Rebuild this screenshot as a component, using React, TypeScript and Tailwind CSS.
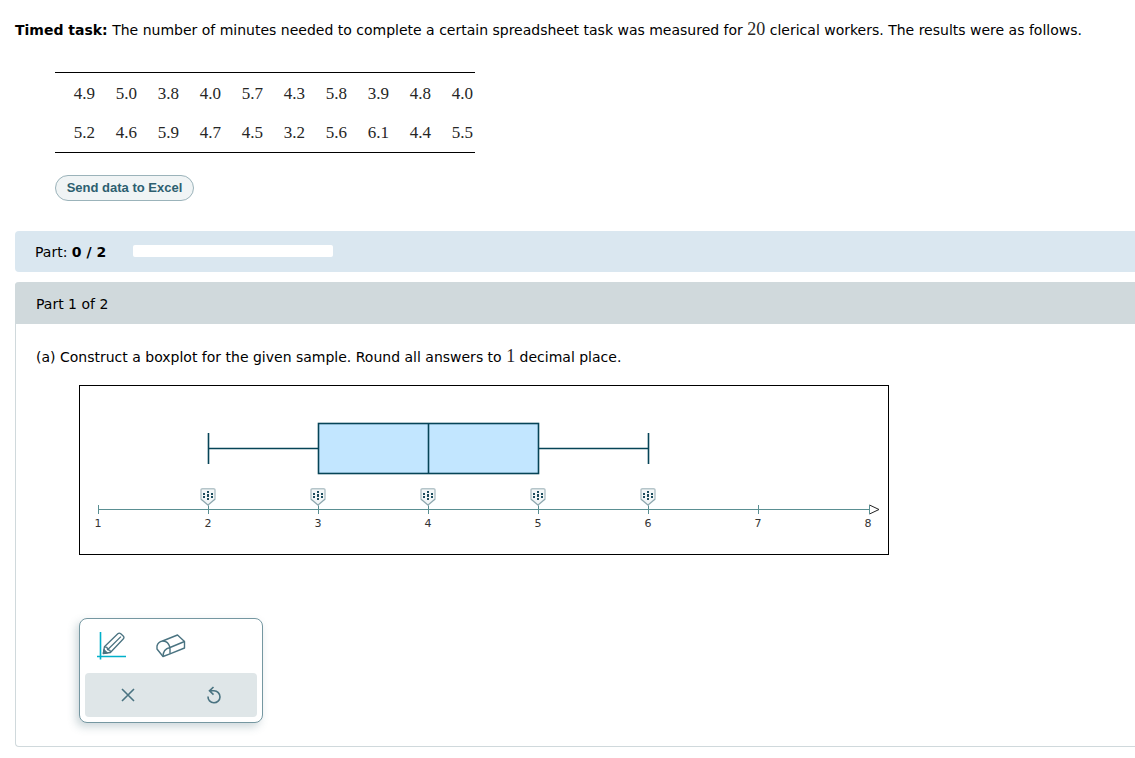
import { useState } from 'react';

const ROWS = [
  ['4.9', '5.0', '3.8', '4.0', '5.7', '4.3', '5.8', '3.9', '4.8', '4.0'],
  ['5.2', '4.6', '5.9', '4.7', '4.5', '3.2', '5.6', '6.1', '4.4', '5.5'],
];

const AXIS_Y = 123.5;
const TICKS = [1, 2, 3, 4, 5, 6, 7, 8];

const toX = (value: number) => 18.5 + (value - 1) * 110;

function Num({ children }: { children: string }) {
  return (
    <span className="font-['Liberation_Serif',serif] text-lg leading-none text-neutral-800">{children}</span>
  );
}

function Handle({ x }: { x: number }) {
  return (
    <g transform={`translate(${x - 0.5} 102)`}>
      <path
        d="M-5.5 0.7h11a1.5 1.5 0 0 1 1.5 1.5v9L0 17L-7 11.2V2.2a1.5 1.5 0 0 1 1.5-1.5z"
        fill="#f3f6f7"
        stroke="#b5c5ca"
        strokeWidth="1.5"
      />
      <path d="M-7 11.2L0 17L7 11.2" fill="none" stroke="#8ba5ad" />
      <g fill="#1d4c5d">
        <rect x="-1" y="3" width="2" height="2" />
        <rect x="-1" y="6" width="2" height="3" />
        <rect x="-1" y="10" width="2" height="2" />
        <rect x="-5" y="5" width="2" height="2" />
        <rect x="-5" y="8" width="2" height="2" />
        <rect x="3" y="5" width="2" height="2" />
        <rect x="3" y="8" width="2" height="2" />
      </g>
    </g>
  );
}

function BoxPlot({ values }: { values: number[] }) {
  const [min, q1, median, q3, max] = values.map(toX);

  return (
    <svg width="808" height="168" viewBox="0 0 808 168" className="block" role="img" aria-label="Boxplot">
      {/* whiskers and box */}
      <g fill="none" stroke="#064457" strokeWidth="1.6">
        <path d={`M${min} 47v31M${min} 62.5H${q1}M${q3} 62.5H${max}M${max} 47v31`} />
        <rect x={q1} y="37.5" width={q3 - q1} height="50" fill="#c2e6ff" />
        <path d={`M${median} 37.5v50`} />
      </g>

      {/* axis */}
      <g stroke="#5a8f92" fill="none">
        <path d={`M${toX(1)} ${AXIS_Y}H789`} />
        {TICKS.slice(0, -1).map((t) => (
          <path key={t} d={`M${toX(t)} 119v9`} />
        ))}
      </g>
      <path d="M789.5 119v9l9.5-4.5z" fill="#fff" stroke="#222" />
      <path d="M789.5 119v9" stroke="#5a8f92" />

      {TICKS.map((t) => (
        <text
          key={t}
          x={toX(t) - 0.5}
          y="141"
          textAnchor="middle"
          fill="#333"
          className="font-['DejaVu_Sans',sans-serif] text-[11px]"
        >
          {t}
        </text>
      ))}

      {values.map((v) => (
        <Handle key={v} x={toX(v)} />
      ))}
    </svg>
  );
}

function PencilIcon() {
  return (
    <svg width="30" height="28" viewBox="0 0 30 28" fill="none">
      <path d="M3.5 0v27.5M0 24.5h29" stroke="#00b0ca" strokeWidth="1.6" />
      <g stroke="#4a7381" strokeWidth="1.3" strokeLinejoin="round">
        <path d="M6.3 21.5L7.4 14.8L20.8 1.8q1.5-1.3 3 0L26.2 4q1.5 1.5 0 3L13.4 20.5z" />
        <path d="M7.4 14.8l2.6.5.6 2.4 2.4.6.4 2.2M10.6 17.7L23.9 4.6" />
      </g>
      <path d="M6.2 21.6l.7-4.3 3.6 3.6z" fill="#4a7381" stroke="#4a7381" />
    </svg>
  );
}

function EraserIcon() {
  return (
    <svg width="30" height="24" viewBox="0 0 30 24" fill="none" stroke="#4a7381" strokeWidth="1.4" strokeLinejoin="round">
      <path d="M6.5 7L21.5 1L28.5 7.5v6.5L14 19.8L7 22.5L1 15V12q1-4 5.5-5z" />
      <path d="M6.5 7Q12 6.5 14 13.5L28.5 7.5M14 13.5v6.3M14 13.5q-7 1.5-7 9" />
    </svg>
  );
}

export default function App() {
  const [values, setValues] = useState([2, 3, 4, 5, 6]);

  return (
    <main className="pt-[18px] pl-[15px] font-['DejaVu_Sans',Verdana,sans-serif] text-sm leading-6 text-black">
      <p>
        <b>Timed task:</b> The number of minutes needed to complete a certain spreadsheet task was measured for{' '}
        <Num>20</Num> clerical workers. The results were as follows.
      </p>

      <div className="mt-[30px] ml-10">
        <div className="w-[420px] border-y border-black pb-px">
          <table className="w-full table-fixed">
            <tbody className="font-['Liberation_Serif',serif] text-[17px] leading-none text-neutral-800">
              {ROWS.map((row, i) => (
                <tr key={i} className="h-[39px]">
                  {row.map((value, j) => (
                    <td key={j} className="p-0 pt-[2px] pr-[2px] text-right">
                      {value}
                    </td>
                  ))}
                </tr>
              ))}
            </tbody>
          </table>
        </div>
        <button
          type="button"
          className="mt-[22px] flex h-[26px] w-[139px] items-center justify-center rounded-full border border-[#9bb3ba] bg-[#f0f4f5] font-['Liberation_Sans',sans-serif] text-[13px] font-bold whitespace-nowrap text-[#2d5f70]"
        >
          Send data to Excel
        </button>
      </div>

      <div className="mt-[30px] flex h-[41px] items-center rounded-l bg-[#dae7f0] pl-5">
        <span>
          Part: <b>0 / 2</b>
        </span>
        <div
          role="progressbar"
          aria-label="Progress"
          aria-valuenow={0}
          aria-valuemax={2}
          className="mb-[2px] ml-[27px] h-3 w-[200px] rounded-xs bg-white"
        />
      </div>

      <section className="mt-[10px] rounded-l border-b border-l border-[#d0d9dc] pb-[23px]">
        <h2 className="-ml-px flex h-[42px] items-center rounded-tl bg-[#d0d9dc] pt-px pl-[21px]">Part 1 of 2</h2>
        <div className="pt-[21px] pl-5">
          <p>
            (a) Construct a boxplot for the given sample. Round all answers to <Num>1</Num> decimal place.
          </p>

          <div className="mt-4 ml-[43px] w-fit border border-black">
            <BoxPlot values={values} />
          </div>

          <div className="mt-[63px] ml-[43px] w-[184px] rounded-lg border border-[#7597a1] bg-white p-[5px] shadow-[-3px_4px_8px_rgba(60,100,110,0.25)]">
            <div className="flex h-[49px] items-center gap-[29px] pb-[6px] pl-3">
              <button type="button" aria-label="Draw">
                <PencilIcon />
              </button>
              <button type="button" aria-label="Erase">
                <EraserIcon />
              </button>
            </div>
            <div className="grid h-11 grid-cols-2 place-items-center rounded bg-[#dfe6e8]">
              <button type="button" aria-label="Clear">
                <svg width="14" height="14" viewBox="0 0 14 14" stroke="#4a7381" strokeWidth="1.6">
                  <path d="M1 1l12 12M13 1L1 13" />
                </svg>
              </button>
              <button type="button" aria-label="Reset" onClick={() => setValues([2, 3, 4, 5, 6])}>
                <svg width="16" height="18" viewBox="0 0 16 18" fill="none" stroke="#4a7381" strokeWidth="1.6">
                  <path d="M2 10.5a6 6 0 1 0 6-5.7H3.5M7.5 1L3.5 4.8L7.5 8.6" />
                </svg>
              </button>
            </div>
          </div>
        </div>
      </section>
    </main>
  );
}
